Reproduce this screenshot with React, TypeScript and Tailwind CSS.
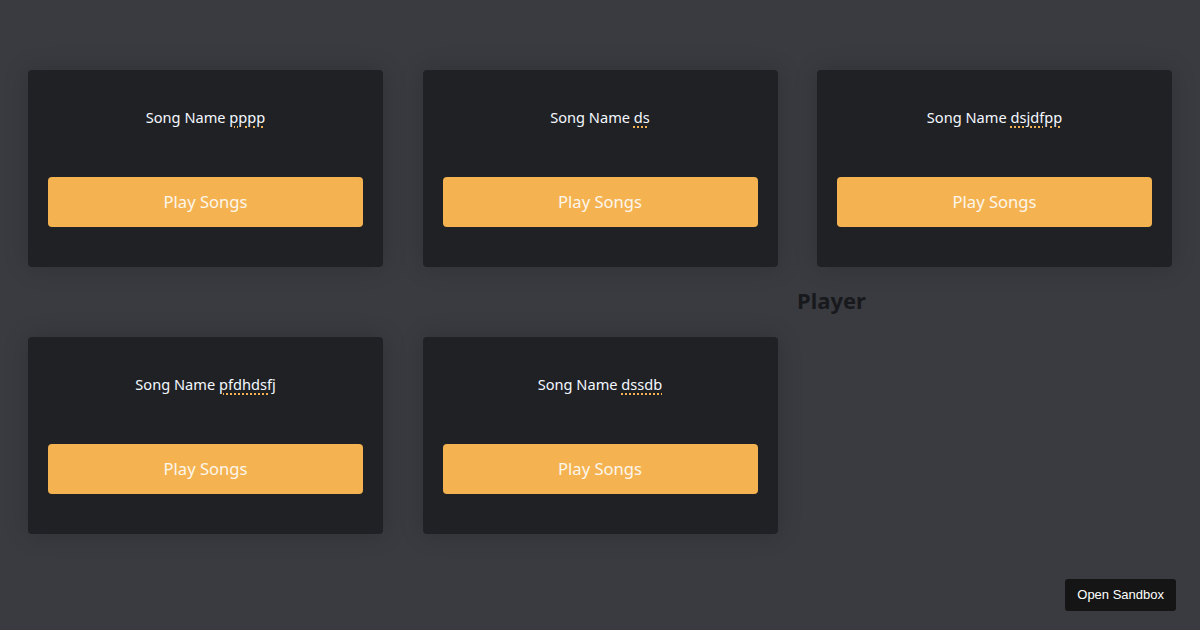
const songs = ['pppp', 'ds', 'dsjdfpp', 'pfdhdsfj', 'dssdb'];

const SongCard = ({ name }: { name: string }) => (
  <div className="w-[355px] h-[197px] bg-[#202125] rounded-[4px] shadow-[0_0_24px_rgba(0,0,0,0.18)] flex flex-col items-center px-5 pt-[36px]">
    <p className="text-[14.6px] leading-[22px] text-[#f4f8ff]">
      Song Name{' '}
      <span className="underline decoration-dotted decoration-[#f4b350] decoration-2 underline-offset-[3px]">{name}</span>
    </p>
    <button className="mt-[49px] w-full h-[50px] bg-[#f4b350] rounded-[4px] text-[#fdf6ec] text-[16.6px]">
      Play Songs
    </button>
  </div>
);

export default function App() {
  return (
    <div
      className="w-[1200px] h-[630px] bg-[#3a3b40] relative overflow-hidden pt-[70px] pl-[28px]"
      style={{ fontFamily: '"Noto Sans", "Open Sans", sans-serif' }}
    >
      <div className="flex gap-[39.5px]">
        {songs.slice(0, 3).map((s) => (
          <SongCard key={s} name={s} />
        ))}
      </div>
      <div className="h-[70px] flex items-center pl-[769px]">
        <h2 className="text-[22px] font-bold text-[#18191c] leading-none -mt-[4px]">Player</h2>
      </div>
      <div className="flex gap-[39.5px]">
        {songs.slice(3).map((s) => (
          <SongCard key={s} name={s} />
        ))}
      </div>
      <button
        className="absolute right-[24px] bottom-[19px] h-[32px] px-3 bg-[#151515] rounded-[3px] text-[13px] text-white"
        style={{ fontFamily: '"Liberation Sans", Arial, sans-serif' }}
      >
        Open Sandbox
      </button>
    </div>
  );
}
